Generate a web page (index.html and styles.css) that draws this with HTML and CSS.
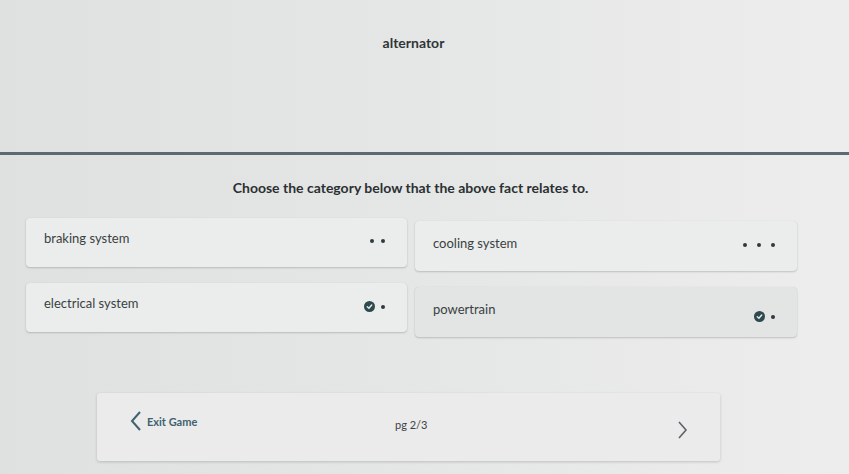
FILE: index.html
```html
<!DOCTYPE html>
<html>
<head>
<meta charset="utf-8">
<link rel="stylesheet" href="styles.css">
</head>
<body>
<div class="page">
  <header class="fact">
    <div class="fact-text">alternator</div>
  </header>
  <div class="divider"></div>
  <section class="quiz">
    <p class="prompt">Choose the category below that the above fact relates to.</p>
    <div class="options">
      <div class="option">
        <span class="label">braking system</span>
        <span class="marks"><i class="dot"></i><i class="dot"></i></span>
      </div>
      <div class="option shift">
        <span class="label">cooling system</span>
        <span class="marks"><i class="dot"></i><i class="dot"></i><i class="dot"></i></span>
      </div>
      <div class="option">
        <span class="label">electrical system</span>
        <span class="marks"><i class="check"><svg viewBox="0 0 10 10" width="11" height="11"><circle cx="5" cy="5" r="5" fill="#2e4a4e"/><path d="M3 5.2 L4.5 6.6 L7 3.6" stroke="#e8ecec" stroke-width="1.3" fill="none" stroke-linecap="round"/></svg></i><i class="dot"></i></span>
      </div>
      <div class="option shift hover">
        <span class="label">powertrain</span>
        <span class="marks"><i class="check"><svg viewBox="0 0 10 10" width="11" height="11"><circle cx="5" cy="5" r="5" fill="#2e4a4e"/><path d="M3 5.2 L4.5 6.6 L7 3.6" stroke="#e8ecec" stroke-width="1.3" fill="none" stroke-linecap="round"/></svg></i><i class="dot"></i></span>
      </div>
    </div>
  </section>
  <footer class="navbar">
    <div class="nav-left">
      <svg class="chev" viewBox="0 0 12 20" width="12" height="20"><path d="M10 1 L2 10 L10 19" stroke="#3f6170" stroke-width="2" fill="none"/></svg>
      <span class="exit">Exit Game</span>
    </div>
    <div class="pg">pg 2/3</div>
    <div class="nav-right">
      <svg viewBox="0 0 10 18" width="10" height="18"><path d="M1 1 L8 9 L1 17" stroke="#5c6266" stroke-width="1.6" fill="none"/></svg>
    </div>
  </footer>
</div>
</body>
</html>
```
FILE: styles.css
```css
html, body {
  margin: 0;
  padding: 0;
}
body {
  width: 849px;
  height: 474px;
  overflow: hidden;
  background: linear-gradient(90deg, #dfe1e0 0%, #e5e7e6 50%, #ecedec 100%);
  font-family: Lato, "Open Sans", sans-serif;
  color: #333a3d;
}
.page {
  display: flex;
  flex-direction: column;
}
.fact {
  height: 152px;
  display: flex;
  justify-content: center;
  padding-top: 34px;
  box-sizing: border-box;
  padding-right: 22px;
}
.fact-text {
  font-weight: 700;
  font-size: 14px;
  color: #2f3538;
}
.divider {
  height: 3px;
  background: #5d6a72;
}
.quiz {
  display: flex;
  flex-direction: column;
  padding: 0 52px 0 26px;
}
.prompt {
  margin: 24px 0 0 0;
  text-align: center;
  font-weight: 700;
  font-size: 14px;
  color: #2b3033;
  padding-right: 2px;
}
.options {
  margin-top: 22px;
  display: grid;
  grid-template-columns: 381px 382px;
  column-gap: 8px;
  row-gap: 12px;
}
.option {
  height: 49px;
  background: #ebedec;
  border-radius: 4px;
  box-shadow: 0 1px 2px rgba(0,0,0,0.18), 0 0 1px rgba(0,0,0,0.1);
  display: flex;
  justify-content: space-between;
  padding: 12px 22px 0 18px;
  box-sizing: border-box;
}
.option.shift {
  margin-top: 3px;
  height: 50px;
  padding-top: 14px;
  padding-right: 22px;
}
.option.hover {
  margin-top: 4px;
  background: #e2e5e4;
}
.label {
  font-size: 13px;
  color: #3a3f42;
}
.marks {
  display: flex;
  align-items: center;
  gap: 7px;
  height: 11px;
  margin-top: 5px;
}
.option.shift .marks {
  gap: 10px;
  margin-top: 4px;
}
.option.hover .marks {
  gap: 6px;
  margin-top: 10px;
}
.option:nth-child(3) .marks {
  margin-top: 6px;
  gap: 6px;
}
.dot {
  width: 4px;
  height: 4px;
  border-radius: 50%;
  background: #2f3a3e;
  display: block;
}
.check {
  display: block;
  width: 11px;
  height: 11px;
}
.check svg {
  display: block;
}
.navbar {
  margin: 56px 0 0 97px;
  width: 623px;
  height: 68px;
  background: #eaebea;
  border-radius: 3px;
  box-shadow: 0 1px 3px rgba(0,0,0,0.18);
  display: flex;
  align-items: flex-start;
  box-sizing: border-box;
  padding: 18px 32px 0 33px;
}
.nav-left {
  display: flex;
  align-items: center;
  gap: 5px;
  width: 265px;
}
.exit {
  font-size: 11px;
  font-weight: 700;
  color: #3f6170;
}
.pg {
  font-size: 11px;
  color: #3d4245;
  margin-top: 7px;
  flex: 1;
}
.nav-right {
  margin-top: 10px;
}
```
